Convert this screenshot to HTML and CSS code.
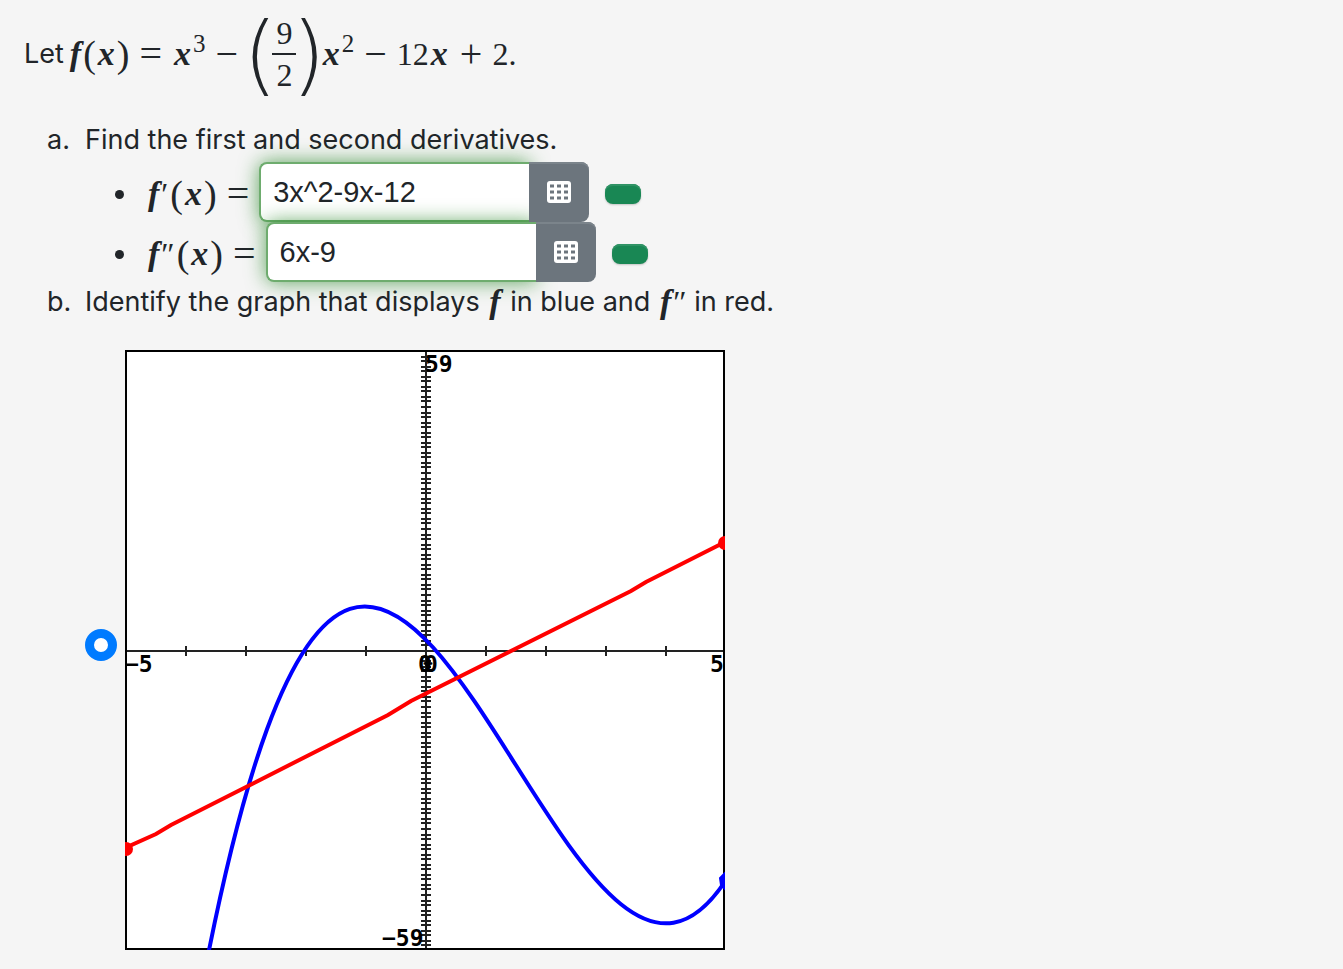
FILE: index.html
```html
<!DOCTYPE html>
<html lang="en">
<head>
    <meta charset="UTF-8">
    <meta name="viewport" content="width=device-width, initial-scale=1.0">
    <title>Derivatives</title>
    <link rel="stylesheet" href="styles.css">
</head>
<body>
<main class="question">
    <p class="intro">
        <span>Let</span>
        <span class="math"><i>f</i><span class="bracket">(</span><i>x</i><span class="bracket">)</span><span class="op">=</span><i>x</i><sup>3</sup><span class="op">−</span><span class="paren">(</span><span class="frac"><span class="num">9</span><span class="den">2</span></span><span class="paren">)</span><i>x</i><sup>2</sup><span class="op">−</span><span>12</span><i>x</i><span class="op">+</span><span>2</span><span>.</span></span>
    </p>

    <ol class="parts">
        <li>
            <div class="prompt">Find the first and second derivatives.</div>
            <ul class="answers">
                <li>
                    <label class="math" for="first"><i>f</i><span class="prime">′</span><span class="bracket">(</span><i>x</i><span class="bracket">)</span><span class="op">=</span></label>
                    <div class="input-group">
                        <input type="text" id="first" value="3x^2-9x-12">
                        <button type="button" class="keypad" aria-label="Keypad">
                            <svg viewBox="0 0 24 22" width="24" height="22"><rect width="24" height="22" rx="3" fill="#fff"/><path d="M3 5h4M10 5h4M17 5h4M3 11h4M10 11h4M17 11h4M3 17h4M10 17h4M17 17h4" stroke="#6c757d" stroke-width="3"/></svg>
                        </button>
                    </div>
                    <span class="badge"></span>
                </li>
                <li>
                    <label class="math" for="second"><i>f</i><span class="prime">″</span><span class="bracket">(</span><i>x</i><span class="bracket">)</span><span class="op">=</span></label>
                    <div class="input-group">
                        <input type="text" id="second" value="6x-9">
                        <button type="button" class="keypad" aria-label="Keypad">
                            <svg viewBox="0 0 24 22" width="24" height="22"><rect width="24" height="22" rx="3" fill="#fff"/><path d="M3 5h4M10 5h4M17 5h4M3 11h4M10 11h4M17 11h4M3 17h4M10 17h4M17 17h4" stroke="#6c757d" stroke-width="3"/></svg>
                        </button>
                    </div>
                    <span class="badge"></span>
                </li>
            </ul>
        </li>
        <li>
            <div class="prompt">Identify the graph that displays <span class="math"><i>f</i></span> in blue and <span class="math"><i>f</i><span class="prime">″</span></span> in red.</div>
            <div class="choice">
                <input type="radio" name="graph" id="graph-1" checked>
                <label for="graph-1">
                    <svg class="graph" viewBox="0 0 600 600" width="600" height="600" role="img" aria-label="Graph choice">
                        <rect width="600" height="600" fill="#fff"/>
                        <path d="M0 301H600M301 0V600" stroke="#222" stroke-width="2"/>
                        <path d="M61 296v10M121 296v10M181 296v10M241 296v10M361 296v10M421 296v10M481 296v10M541 296v10" stroke="#222" stroke-width="2"/>
                        <path id="ticks" stroke="#222" stroke-width="2"/>
                        <g class="axis-labels">
                            <text x="300" y="22">59</text>
                            <text x="257" y="596">−59</text>
                            <text x="0" y="322">−5</text>
                            <text x="585" y="322">5</text>
                            <text x="293" y="322">0</text>
                            <text x="299" y="322">0</text>
                        </g>
                        <rect x="1" y="1" width="598" height="598" fill="none" stroke="#000" stroke-width="2"/>
                        <path d="M59 738C240 -362 421 805 601 530" fill="none" stroke="#00f" stroke-width="4"/>
                        <path d="M600 523l-5 5 1 7 4 4z" fill="#00f" stroke="#00f" stroke-width="2"/>
                        <path d="M0 498L31 484L46 475L263 365L286 351L506 241L521 232L600 192" fill="none" stroke="#f00" stroke-width="4"/>
                        <circle cx="1" cy="499" r="7" fill="#f00"/>
                        <circle cx="600" cy="193" r="7" fill="#f00"/>
                    </svg>
                </label>
            </div>
        </li>
    </ol>
</main>

<script>
    // One tick per unit on the y axis, snapped to even pixels
    let d = '';
    for (let i = -58; i <= 58; i++) {
        const y = Math.round((300 - i * 300 / 59) / 2) * 2 + 1;
        d += `M296 ${y}h10`;
    }
    document.getElementById('ticks').setAttribute('d', d);
</script>
</body>
</html>
```
FILE: styles.css
```css
body {
    margin: 0;
    background-color: #f5f5f5;
    color: #212529;
    font-family: Inter, sans-serif;
    font-size: 27px;
    line-height: 40px;
}

.question {
    padding: 8px 24px 18px;
}

.intro {
    display: flex;
    align-items: center;
    gap: 4px;
    height: 92px;
    margin: 0 0 20px;
}

.math {
    display: inline-flex;
    align-items: center;
    font-family: "Liberation Serif", serif;
    font-size: 32px;
    line-height: 40px;
}

.math i {
    margin: 0 2px;
    font-size: 34px;
    font-weight: bold;
}

.math sup {
    font-size: 25px;
    line-height: 24px;
    margin-bottom: 20px;
    vertical-align: baseline;
}

.bracket {
    font-size: 38px;
}

.op {
    font-size: 40px;
    margin: 0 10px;
}

.paren {
    margin: 0 -5px;
    font-family: "DejaVu Sans", sans-serif;
    font-size: 88px;
    font-weight: 200;
    line-height: 80px;
}

.frac {
    display: flex;
    flex-direction: column;
    text-align: center;
}

.frac .num {
    border-bottom: 2px solid #212529;
}

.frac span {
    padding: 0 4px;
}

.parts, .answers {
    list-style: none;
    margin: 0;
    padding: 0;
}

.parts {
    counter-reset: part;
}

.parts > li {
    position: relative;
    padding-left: 61px;
    counter-increment: part;
}

.parts > li::before {
    content: counter(part, lower-alpha) ".";
    position: absolute;
    left: 23px;
}

.prompt {
    height: 40px;
    white-space: nowrap;
}

.prompt .math {
    height: 40px;
    vertical-align: top;
}

.answers {
    padding-top: 2px;
}

.answers > li {
    display: flex;
    align-items: center;
    height: 60px;
    padding-left: 30px;
}

.answers > li::before {
    content: "";
    width: 9px;
    height: 9px;
    margin-top: 4px;
    margin-right: 22px;
    border-radius: 50%;
    background-color: #212529;
}

.answers .math {
    margin-top: 4px;
}

.answers .prime {
    margin-right: 2px;
}

.input-group {
    display: flex;
    height: 60px;
}

.input-group input {
    box-sizing: border-box;
    width: 270px;
    padding: 0 12px;
    border: 2px solid #6eac6e;
    border-right: none;
    border-radius: 8px 0 0 8px;
    background-color: #fff;
    box-shadow: 0 0 20px rgba(30, 130, 30, 0.7);
    color: #212529;
    font-family: "Liberation Sans", sans-serif;
    font-size: 29px;
}

.keypad {
    position: relative;
    display: flex;
    align-items: center;
    justify-content: center;
    width: 60px;
    padding: 0;
    border: none;
    border-radius: 0 8px 8px 0;
    background-color: #6c757d;
    box-shadow: inset 0 2px 0 #7b848b;
}

.badge {
    width: 36px;
    height: 20px;
    margin-top: 4px;
    margin-left: 16px;
    border-radius: 8px;
    background-color: #198754;
    box-shadow: inset 0 2px 0 #2f9365, 0 1px 2px rgba(0, 0, 0, 0.2);
}

.choice {
    display: flex;
    align-items: center;
    gap: 8px;
    margin-top: 28px;
}

.choice label {
    display: block;
}

.choice input {
    appearance: none;
    box-sizing: border-box;
    width: 32px;
    height: 32px;
    margin: 0 0 10px;
    border: 9px solid #007bff;
    border-radius: 50%;
    background-color: #fff;
}

.graph {
    display: block;
}

.axis-labels {
    font-family: "DejaVu Sans Mono", monospace;
    font-size: 23px;
    font-weight: bold;
}
```
